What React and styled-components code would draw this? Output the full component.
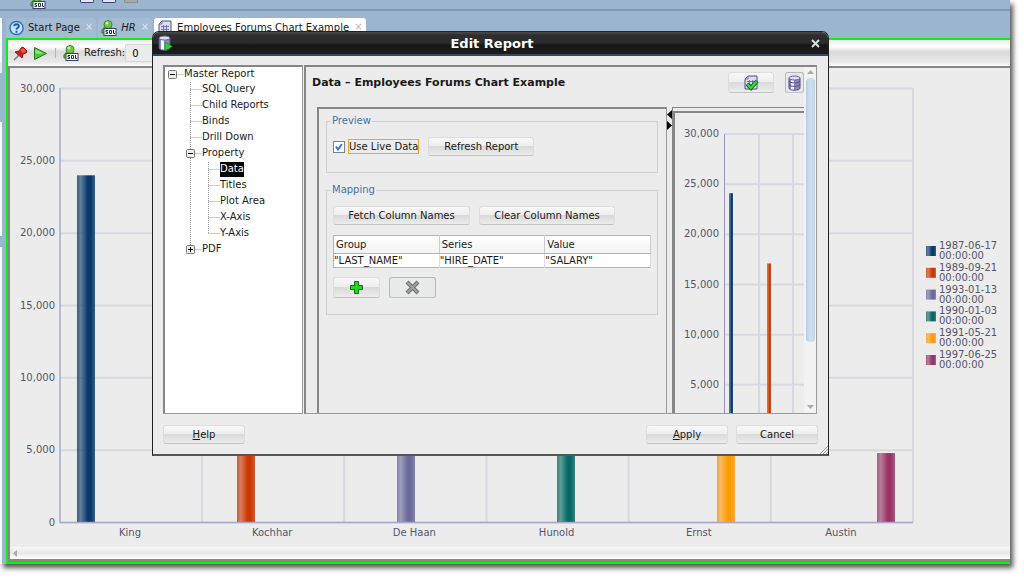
import styled, { createGlobalStyle } from 'styled-components';

const GlobalStyle = createGlobalStyle`
    body {
        margin: 0;
        background: #ffffff;
    }
    * {
        box-sizing: border-box;
    }
`;

const uiFont = '"DejaVu Sans", sans-serif';

const Page = styled.div`
    position: relative;
    height: 100vh;
    padding: 0 14px 14px 0;
    overflow: hidden;
    background: #ffffff;
    color: #1a1a1a;
    font-family: ${uiFont};
    font-size: 10px;
    line-height: 16px;
`;

const AppWindow = styled.div`
    display: flex;
    flex-direction: column;
    height: 100%;
    background: #9bb4cf;
    box-shadow: 3px 4px 5px #555555;
`;

const MainToolbar = styled.div`
    display: flex;
    gap: 8px;
    height: 11px;
    padding-left: 30px;
    overflow: hidden;
    align-items: flex-end;
    border-bottom: 2px solid #8098b4;
`;

const ToolStub = styled.span`
    width: 14px;
    height: 4px;
    margin: 0 0 6px;
    border: 1px solid ${p => (p.$muted ? '#8d8d8d' : '#3f3f86')};
    border-top: 0;
    border-radius: 0 0 2px 2px;
    background: ${p => (p.$muted ? '#a8a8a8' : '#e4e4f4')};

    &:nth-of-type(1) {
        margin-left: 26px;
    }
`;

const Workspace = styled.div`
    display: flex;
    flex: 1;
    min-height: 0;
    padding-top: 7px;
`;

const SideEdge = styled.div`
    width: 2px;
    background: linear-gradient(#ffffff 0 8%, #ececec 8% 10%, #9bb4cf 10% 19%, #ffffff 19% 40%, #9bb4cf 40% 42%, #ffffff 42%);
`;

const EditorArea = styled.div`
    display: flex;
    flex-direction: column;
    flex: 1;
    min-width: 0;
    padding-left: 4px;
`;

const Tabs = styled.div`
    display: flex;
    gap: 2px;
`;

const Tab = styled.div`
    display: flex;
    align-items: center;
    gap: 4px;
    height: 20px;
    padding: 0 3px;
    border-radius: 3px 3px 0 0;
    background: ${p => (p.$active ? '#ffffff' : '#a5bbd2')};
    font-style: ${p => (p.$italic ? 'italic' : 'normal')};
`;

const TabClose = styled.button`
    border: 0;
    padding: 0 0 4px 1px;
    background: transparent;
    color: ${p => (p.$dark ? '#b5b5b5' : '#dde6ef')};
    font: 10px ${uiFont};
`;

const Editor = styled.div`
    display: flex;
    flex-direction: column;
    flex: 1;
    min-height: 0;
    border: 2px solid #00f800;
    border-right: 0;
    background: #ececec;
`;

const EditorToolbar = styled.div`
    display: flex;
    align-items: center;
    gap: 5px;
    height: 26px;
    padding-left: 5px;
    background: linear-gradient(#ececec, #ffffff 25%, #dadada 45%, #e8e8e8 85%, #ffffff);
`;

const Separator = styled.span`
    width: 1px;
    height: 10px;
    margin: 0 2px;
    background: #b5b5b5;
`;

const RefreshLabel = styled.label`
    display: flex;
    align-items: center;
`;

const RefreshSelect = styled.select`
    appearance: none;
    width: 70px;
    height: 18px;
    padding: 0 6px;
    border: 1px solid #d6d6d6;
    border-radius: 2px;
    background: #ececec;
    font: 10px ${uiFont};
`;

const ChartPanel = styled.div`
    flex: 1;
    min-height: 0;
    overflow: hidden;
    border-top: 2px solid #868686;
    border-left: 2px solid #868686;
`;

const ChartSvg = styled.svg`
    display: block;
    width: 100%;
    font-family: ${uiFont};
    font-size: 10px;
    fill: #55556b;
`;

const HorizontalScroll = styled.div`
    display: flex;
    align-items: center;
    height: 12px;
    padding-left: 3px;
    border-left: 2px solid #868686;
    background: linear-gradient(#f8f8f8, #e6e6e6 50%, #ffffff);
`;

const EditorFoot = styled.div`
    height: 3px;
    background: #868686;
`;

const Dialog = styled.div`
    position: absolute;
    top: 31px;
    left: 152px;
    display: flex;
    flex-direction: column;
    width: 677px;
    height: 425px;
    border: 1px solid #222222;
    border-bottom: 2px solid #555555;
    border-radius: 7px 7px 0 0;
    background: #ececec;
`;

const TitleBar = styled.div`
    display: flex;
    align-items: center;
    height: 24px;
    padding: 0 8px 0 4px;
    border-bottom: 2px solid #34465c;
    border-radius: 6px 6px 0 0;
    background: linear-gradient(#4a4a4a, #2e2e2e 15%, #2b2b2b 50%, #161616 60%, #1d1d1d);
    color: #ffffff;
    font: bold 13px ${uiFont};
`;

const TitleText = styled.span`
    flex: 1;
    text-align: center;
`;

const CloseButton = styled.button`
    display: flex;
    padding: 0;
    border: 0;
    background: transparent;
`;

const DialogBody = styled.div`
    display: flex;
    flex: 1;
    gap: 1px;
    min-height: 0;
    padding: 9px 11px 0 10px;
`;

const Tree = styled.ul`
    width: 140px;
    margin: 0;
    padding: 0 0 0 3px;
    border: 1px solid #9a9a9a;
    border-top: 2px solid #868686;
    border-left: 2px solid #868686;
    background: #ffffff;
    list-style: none;
`;

const TreeRow = styled.li`
    display: flex;
    height: 16px;

    &:first-child,
    &:last-child {
        height: 15px;
    }
`;

const TreeText = styled.span`
    height: 15px;
    line-height: 14px;
    background: ${p => (p.$selected ? '#000000' : 'transparent')};
    color: ${p => (p.$selected ? '#ffffff' : '#1a1a1a')};
`;

const EditPane = styled.div`
    display: flex;
    flex: 1;
    min-width: 0;
    border: 1px solid #9a9a9a;
    border-top: 2px solid #868686;
    border-left: 2px solid #868686;
`;

const EditContent = styled.div`
    display: flex;
    flex-direction: column;
    flex: 1;
    min-width: 0;
    overflow: hidden;
`;

const PaneHeader = styled.div`
    display: flex;
    align-items: center;
    gap: 11px;
    height: 31px;
    margin-bottom: 9px;
    padding-left: 6px;
`;

const PaneTitle = styled.h1`
    flex: 1;
    margin: 0;
    font-size: 11px;
    white-space: nowrap;
`;

const Button = styled.button`
    display: inline-flex;
    flex: none;
    align-items: center;
    justify-content: center;
    width: ${p => p.$width}px;
    height: ${p => p.$height || 19}px;
    padding: 0;
    border: 1px solid ${p => (p.$outlined ? '#b5b8b8' : '#dddddd')};
    border-bottom-color: #c4c4c4;
    border-radius: 3px;
    background: ${p => (p.$outlined ? '#e8eaea' : 'linear-gradient(#f8f8f8, #eeeeee 45%, #d9d9d9 50%, #ececec)')};
    color: #1a1a1a;
    font: 10px ${uiFont};
`;

const Split = styled.div`
    display: flex;
    flex: 1;
    min-height: 0;
    padding-left: 11px;
`;

const FormPane = styled.div`
    width: 350px;
    padding: 4px 8px 0 7px;
    border: 1px solid #9a9a9a;
    border-top: 2px solid #868686;
    border-left: 2px solid #868686;
    border-bottom: 0;
`;

const SplitDivider = styled.div`
    width: 5px;
`;

const PreviewPane = styled.div`
    flex: 1;
    min-width: 0;
    padding-top: 3px;
    overflow: hidden;
    border-top: 1px solid #868686;
    border-left: 1px solid #868686;
`;

const PreviewChart = styled.div`
    height: 100%;
    overflow: hidden;
    border-top: 2px solid #868686;
    border-left: 2px solid #868686;
`;

const PreviewSvg = styled(ChartSvg)`
    width: 160px;
`;

const Group = styled.fieldset`
    height: ${p => p.$height}px;
    min-width: 0;
    margin: 0 0 9px;
    padding: 8px 6px 0;
    border: 1px solid #d0d0d0;
`;

const Legend = styled.legend`
    padding: 0 1px;
    margin-left: -2px;
    height: 16px;
    color: #4472a8;
`;

const Row = styled.div`
    display: flex;
    align-items: center;
    gap: 9px;
`;

const CheckLabel = styled.label`
    display: flex;
    align-items: center;
    gap: 3px;
`;

const CheckBox = styled.input`
    appearance: none;
    width: 12px;
    height: 12px;
    margin: 0;
    border: 1px solid #7d8288;
    background: #ffffff url("data:image/svg+xml,%3Csvg xmlns='http://www.w3.org/2000/svg' viewBox='0 0 10 10'%3E%3Cpath d='M2 4.5l2 3 4-5.500' fill='none' stroke='%233b74d0' stroke-width='2'/%3E%3C/svg%3E") center / 10px no-repeat;
`;

const FocusText = styled.span`
    height: 15px;
    line-height: 13px;
    border: 1px solid #f5a623;
`;

const MappingTable = styled.table`
    width: 318px;
    margin: 10px 0 9px;
    border: 1px solid #b5b5b5;
    border-collapse: collapse;
    table-layout: fixed;
    background: #ffffff;
`;

const HeadCell = styled.th`
    height: 18px;
    padding: 0 2px;
    border-right: 1px solid #cccccc;
    border-bottom: 1px solid #b5b5b5;
    background: linear-gradient(#ffffff, #f2f2f2);
    font-weight: normal;
    line-height: 16px;
    text-align: left;
`;

const Cell = styled.td`
    height: 14px;
    padding: 0;
    border-right: 1px solid #dddddd;
    line-height: 13px;
`;

const VerticalScroll = styled.div`
    display: flex;
    flex-direction: column;
    align-items: center;
    justify-content: space-between;
    width: 12px;
    padding: 3px 0 4px;
    background: #f2f2f2;
`;

const ScrollThumb = styled.div`
    width: 9px;
    height: 264px;
    margin: 4px 0 auto;
    border-radius: 4px;
    background: linear-gradient(90deg, #b4cbe3, #cfe0f0 40%, #c2d6ea);
`;

const DialogFooter = styled.div`
    display: flex;
    align-items: center;
    gap: 8px;
    height: 40px;
    padding: 0 10px;
`;

const Spacer = styled.div`
    flex: 1;
`;

const Grip = styled.svg`
    position: absolute;
    right: 0;
    bottom: 0;
`;

function SqlIcon() {
    return (
        <svg width="16" height="16" viewBox="0 0 16 16">
            <path d="M1 13c-1-5 3-6 6-6s6 1 5 6z" fill="#62b83c" stroke="#3c7c28" />
            <circle cx="7" cy="4.500" r="4" fill="#6cc840" stroke="#3c8c28" />
            <circle cx="6" cy="3" r="1.500" fill="#c8f4b0" />
            <rect x="3" y="8.500" width="12" height="7" fill="#ffffff" stroke="#394363" />
            <path d="M7 10.500H5v1.500h1.500v1.500H4.500M8.500 10.500h2v3h-2zM12.500 10v3.500h1.500" fill="none" stroke="#233055" />
        </svg>
    );
}

function HelpIcon() {
    return (
        <svg width="15" height="16" viewBox="0 0 16 16">
            <circle cx="8" cy="8" r="7" fill="#c8e2ff" stroke="#2870c8" strokeWidth="1.500" />
            <path d="M5.500 6.200c0-3 5-3 5 0 0 1.800-2.500 1.600-2.500 3.500M8 11v2" fill="none" stroke="#2058a8" strokeWidth="2" />
        </svg>
    );
}

function ReportIcon({ checked }) {
    return (
        <svg width="16" height="16" viewBox="0 0 16 16">
            <path d="M5 1h9v13H2V4z" fill="#dcdcf0" stroke="#4c4c88" />
            <path d="M2 4h3V1M4 6.500h8M4 9.500h8M6.500 5v7M9.500 5v7" fill="none" stroke="#7474ac" />
            {checked && <path d="M4 9l4 4 6-7" fill="none" stroke="#176b17" strokeWidth="4" />}
            {checked && <path d="M4.500 9.500l3.500 3.500 5.500-6.500" fill="none" stroke="#38dc38" strokeWidth="2.200" />}
        </svg>
    );
}

function DatabaseIcon({ run }) {
    return (
        <svg width="16" height="16" viewBox="0 0 16 16">
            <path d="M2 3v10c0 3 11 3 11 0V3z" fill="#8a8abc" stroke="#4e4e88" />
            <path d="M4 4v10.500h3V4z" fill="#f4f4fc" />
            <ellipse cx="7.500" cy="3" rx="5.500" ry="2" fill="#dedef0" stroke="#5e5e98" />
            {!run && <path d="M2 6c0 2.500 11 2.500 11 0M2 9.500c0 2.500 11 2.500 11 0" fill="none" stroke="#4e4e88" />}
            {run && <path d="M8 7l7.500 4.500L8 16z" fill="#2cd42c" stroke="#106410" strokeWidth=".5" />}
        </svg>
    );
}

function PinIcon() {
    return (
        <svg width="15" height="15" viewBox="0 0 15 15">
            <path d="M1 14l5-5" stroke="#777777" strokeWidth="1.500" />
            <path d="M2 6l4-1 2-3 2-1 4 4-1 2-3 1-1 4z" fill="#cc2020" stroke="#9c1414" />
            <path d="M10 2l3 3-3 2-3-3z" fill="#f05848" />
        </svg>
    );
}

function PlayIcon() {
    return (
        <svg width="15" height="15" viewBox="0 0 15 15">
            <path d="M1.500 1.500L13.500 7.500 1.500 13.500z" fill="#4cc838" stroke="#207c18" />
            <path d="M2.500 3.500l8 4h-8z" fill="#9ce888" />
        </svg>
    );
}

const treeRows = [
    { text: 'Master Report', guides: ['root'] },
    { text: 'SQL Query', guides: ['blank', 'tee'] },
    { text: 'Child Reports', guides: ['blank', 'tee'] },
    { text: 'Binds', guides: ['blank', 'tee'] },
    { text: 'Drill Down', guides: ['blank', 'tee'] },
    { text: 'Property', guides: ['blank', 'minus'] },
    { text: 'Data', guides: ['blank', 'line', 'tee'], selected: true },
    { text: 'Titles', guides: ['blank', 'line', 'tee'] },
    { text: 'Plot Area', guides: ['blank', 'line', 'tee'] },
    { text: 'X-Axis', guides: ['blank', 'line', 'tee'] },
    { text: 'Y-Axis', guides: ['blank', 'line', 'end'] },
    { text: 'PDF', guides: ['blank', 'plus'] },
];

function Guides({ guides }) {
    const width = guides.length * 18 - 2;
    return (
        <svg width={width} height="16">
            {guides.map((kind, i) => {
                const x = 4.5 + i * 18;
                const box = kind === 'root' || kind === 'minus' || kind === 'plus';
                return (
                    <g key={i} fill="none" stroke="#9a9a9a" strokeDasharray="1 1">
                        {kind !== 'blank' && kind !== 'root' && <path d={`M${x} 0V${kind === 'end' || kind === 'plus' ? 8 : 16}`} />}
                        {kind !== 'blank' && kind !== 'line' && <path d={`M${x} 7.500H${width}`} />}
                        {box && <rect x={x - 4} y="3.500" width="8" height="8" rx="1" fill="#eeeeec" stroke="#77776f" strokeDasharray="none" />}
                        {box && <path d={`M${x - 2.5} 7.500h5`} stroke="#000000" strokeDasharray="none" />}
                        {kind === 'plus' && <path d={`M${x} 5v5`} stroke="#000000" strokeDasharray="none" />}
                    </g>
                );
            })}
        </svg>
    );
}

const employees = [
    { name: 'King', salary: 24000, date: '1987-06-17', color: '#073a6b' },
    { name: 'Kochhar', salary: 17000, date: '1989-09-21', color: '#cc3500' },
    { name: 'De Haan', salary: 17000, date: '1993-01-13', color: '#6a6a9c' },
    { name: 'Hunold', salary: 9000, date: '1990-01-03', color: '#056864' },
    { name: 'Ernst', salary: 6000, date: '1991-05-21', color: '#ff9a05' },
    { name: 'Austin', salary: 4800, date: '1997-06-25', color: '#993366' },
];
const ticks = [30000, 25000, 20000, 15000, 10000, 5000, 0];

function BarFills({ prefix }) {
    return (
        <defs>
            {employees.map((e, i) => (
                <linearGradient id={prefix + i} key={e.name}>
                    <stop offset="0" stopColor={e.color} stopOpacity=".8" />
                    <stop offset=".2" stopColor={e.color} stopOpacity=".6" />
                    <stop offset=".6" stopColor={e.color} />
                    <stop offset=".75" stopColor={e.color} />
                    <stop offset="1" stopColor={e.color} stopOpacity=".8" />
                </linearGradient>
            ))}
        </defs>
    );
}

function SalaryChart() {
    const y = value => 454.5 - (value * 434) / 30000;
    return (
        <ChartSvg viewBox="0 0 1000 480">
            <BarFills prefix="bar" />
            {ticks.map(t => (
                <g key={t}>
                    <path d={`M50 ${y(t)}H903`} stroke="#d8d8e0" strokeWidth="2" />
                    <text x="45" y={y(t) + 3} textAnchor="end">{t.toLocaleString('en-US')}</text>
                </g>
            ))}
            {employees.map((e, i) => (
                <g key={e.name}>
                    <path d={`M${192 + i * 142.2} 20V454`} stroke="#d8d8e0" strokeWidth="2" />
                    <rect x={67 + i * 160} y={y(e.salary)} width="18" height={454 - y(e.salary)} fill={`url(#bar${i})`} />
                    <text x={120 + i * 142.2} y="468" textAnchor="middle">{e.name}</text>
                    <rect x="916" y={178 + i * 21.8} width="10" height="10" fill={`url(#bar${i})`} />
                    <text x="929" y={181 + i * 21.8}>{e.date}</text>
                    <text x="929" y={191 + i * 21.8}>00:00:00</text>
                </g>
            ))}
            <path d="M50 20V454.500H903" fill="none" stroke="#a9a9c9" strokeWidth="1.500" />
        </ChartSvg>
    );
}

function PreviewSalaryChart() {
    const y = value => 322 - (value * 301) / 30000;
    return (
        <PreviewSvg viewBox="0 0 160 340">
            <BarFills prefix="mini" />
            {ticks.filter(t => t > 0).map(t => (
                <g key={t}>
                    <path d={`M50 ${y(t)}H160`} stroke="#d8d8e0" strokeWidth="2" />
                    <text x="44" y={y(t) + 3} textAnchor="end">{t.toLocaleString('en-US')}</text>
                </g>
            ))}
            <path d="M84 21V322M118 21V322" stroke="#d8d8e0" strokeWidth="2" />
            <path d="M49.500 21V322" stroke="#9494c0" />
            {employees.slice(0, 2).map((e, i) => (
                <rect key={e.name} x={54 + i * 38} y={y(e.salary) - 1} width="4" height={323 - y(e.salary)} fill={`url(#mini${i})`} />
            ))}
        </PreviewSvg>
    );
}

function EditReportDialog() {
    return (
        <Dialog role="dialog" aria-label="Edit Report">
            <TitleBar>
                <DatabaseIcon run />
                <TitleText>Edit Report</TitleText>
                <CloseButton aria-label="Close">
                    <svg width="9" height="9"><path d="M1 1l7 7M8 1l-7 7" stroke="#dddddd" strokeWidth="2" /></svg>
                </CloseButton>
            </TitleBar>
            <DialogBody>
                <Tree>
                    {treeRows.map(row => (
                        <TreeRow key={row.text}>
                            <Guides guides={row.guides} />
                            <TreeText $selected={row.selected}>{row.text}</TreeText>
                        </TreeRow>
                    ))}
                </Tree>
                <EditPane>
                    <EditContent>
                        <PaneHeader>
                            <PaneTitle>Data – Employees Forums Chart Example</PaneTitle>
                            <Button $width={46} $height={21} aria-label="Check report"><ReportIcon checked /></Button>
                            <Button $width={19} $height={21} $outlined aria-label="Database"><DatabaseIcon /></Button>
                        </PaneHeader>
                        <Split>
                            <FormPane>
                                <Group $height={60}>
                                    <Legend>Preview</Legend>
                                    <Row>
                                        <CheckLabel>
                                            <CheckBox type="checkbox" defaultChecked />
                                            <FocusText>Use Live Data</FocusText>
                                        </CheckLabel>
                                        <Button $width={106}>Refresh Report</Button>
                                    </Row>
                                </Group>
                                <Group $height={133}>
                                    <Legend>Mapping</Legend>
                                    <Row>
                                        <Button $width={137}>Fetch Column Names</Button>
                                        <Button $width={136}>Clear Column Names</Button>
                                    </Row>
                                    <MappingTable>
                                        <thead>
                                            <tr><HeadCell>Group</HeadCell><HeadCell>Series</HeadCell><HeadCell>Value</HeadCell></tr>
                                        </thead>
                                        <tbody>
                                            <tr><Cell>"LAST_NAME"</Cell><Cell>"HIRE_DATE"</Cell><Cell>"SALARY"</Cell></tr>
                                        </tbody>
                                    </MappingTable>
                                    <Row>
                                        <Button $width={47} $height={21} aria-label="Add">
                                            <svg width="15" height="15"><path d="M5.500 1.500h4v4h4v4h-4v4h-4v-4h-4v-4h4z" fill="#20d820" stroke="#107010" /></svg>
                                        </Button>
                                        <Button $width={47} $height={21} $outlined aria-label="Remove">
                                            <svg width="15" height="15"><path d="M2 2l11 11M13 2L2 13" stroke="#6e6e6e" strokeWidth="4" /><path d="M2.500 2.500l10 10M12.500 2.500l-10 10" stroke="#a0a0a0" strokeWidth="2" /></svg>
                                        </Button>
                                    </Row>
                                </Group>
                            </FormPane>
                            <SplitDivider>
                                <svg width="5" height="24"><path d="M5 3v9L0 7.500zM0 14v9l5-4.500z" fill="#000000" /></svg>
                            </SplitDivider>
                            <PreviewPane>
                                <PreviewChart>
                                    <PreviewSalaryChart />
                                </PreviewChart>
                            </PreviewPane>
                        </Split>
                    </EditContent>
                    <VerticalScroll>
                        <svg width="7" height="4"><path d="M0 4l3.500-4L7 4z" fill="#aaaaaa" /></svg>
                        <ScrollThumb />
                        <svg width="7" height="4"><path d="M0 0l3.500 4L7 0z" fill="#aaaaaa" /></svg>
                    </VerticalScroll>
                </EditPane>
            </DialogBody>
            <DialogFooter>
                <Button $width={82}><u>H</u>elp</Button>
                <Spacer />
                <Button $width={82}><u>A</u>pply</Button>
                <Button $width={82}>Cancel</Button>
            </DialogFooter>
            <Grip width="8" height="8"><path d="M0 8l8-8M3 8l5-5M6 8l2-2" stroke="#a0a090" /></Grip>
        </Dialog>
    );
}

function App() {
    return (
        <>
            <GlobalStyle />
            <Page>
                <AppWindow>
                    <MainToolbar>
                        <SqlIcon />
                        <ToolStub />
                        <ToolStub />
                        <ToolStub $muted />
                    </MainToolbar>
                    <Workspace>
                        <SideEdge />
                        <EditorArea>
                            <Tabs>
                                <Tab><HelpIcon />Start Page<TabClose aria-label="Close Start Page">×</TabClose></Tab>
                                <Tab $italic><SqlIcon />HR<TabClose aria-label="Close HR">×</TabClose></Tab>
                                <Tab $active><ReportIcon />Employees Forums Chart Example<TabClose $dark aria-label="Close report">×</TabClose></Tab>
                            </Tabs>
                            <Editor>
                                <EditorToolbar>
                                    <PinIcon />
                                    <PlayIcon />
                                    <Separator />
                                    <SqlIcon />
                                    <RefreshLabel>
                                        Refresh:
                                        <RefreshSelect><option>0</option></RefreshSelect>
                                    </RefreshLabel>
                                </EditorToolbar>
                                <ChartPanel>
                                    <SalaryChart />
                                </ChartPanel>
                                <HorizontalScroll>
                                    <svg width="4" height="7"><path d="M4 0v7L0 3.500z" fill="#aaaaaa" /></svg>
                                </HorizontalScroll>
                                <EditorFoot />
                            </Editor>
                        </EditorArea>
                    </Workspace>
                </AppWindow>
                <EditReportDialog />
            </Page>
        </>
    );
}

export default App;
